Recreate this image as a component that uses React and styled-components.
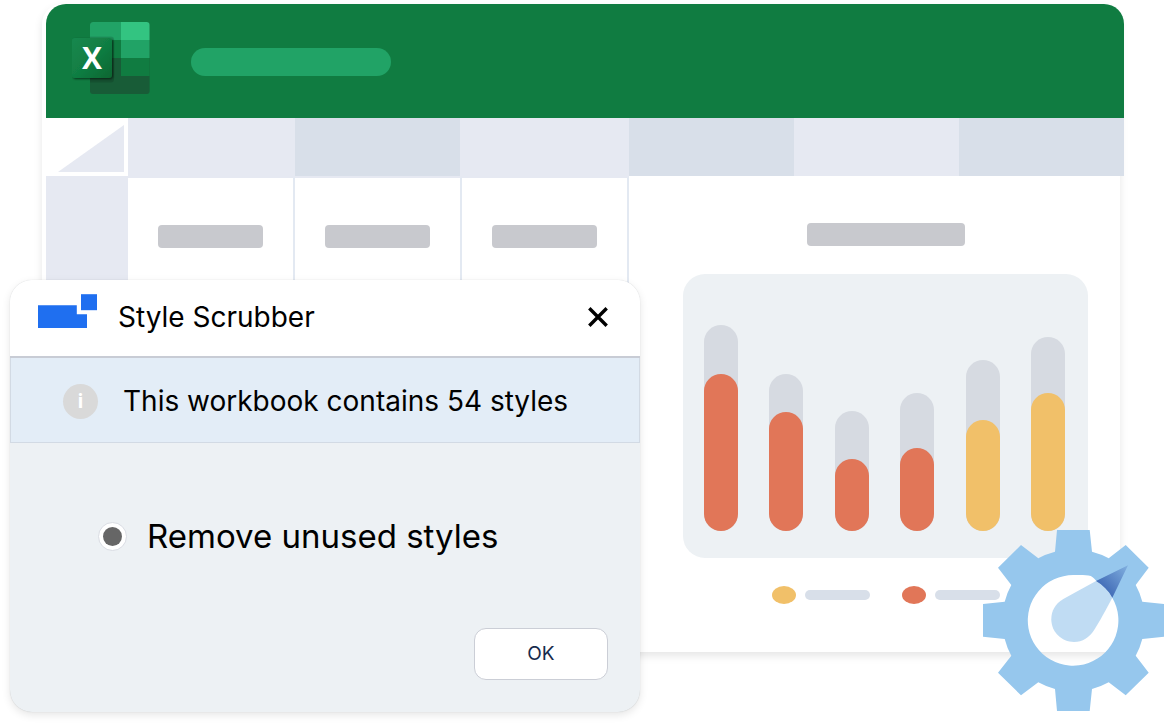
import { useState } from "react";
import styled, { createGlobalStyle } from "styled-components";

const GlobalStyle = createGlobalStyle`
  *,
  *::before,
  *::after {
    box-sizing: border-box;
  }
  body {
    margin: 0;
    background-color: #fff;
    font-family: Inter, "Liberation Sans", sans-serif;
  }
  svg {
    display: block;
    flex-shrink: 0;
  }
`;

const Page = styled.main`
  position: relative;
  min-height: 100vh;
  padding: 4px 44px 0 42px;
  overflow: hidden;
`;

/* Workbook window */
const Workbook = styled.section`
  background-color: #fff;
  border-radius: 20px 20px 0 0;
  box-shadow: 0 4px 8px rgba(0, 0, 0, 0.1);
`;

const WorkbookContent = styled.div`
  margin: 0 -4px 0 4px;
`;

const TitleBar = styled.header`
  display: flex;
  align-items: center;
  gap: 41px;
  padding: 18px 26px 24px;
  background-color: #107c41;
  border-radius: 20px 20px 0 0;
`;

const TitlePill = styled.div`
  width: 200px;
  height: 28px;
  margin-top: 8px;
  border-radius: 14px;
  background-color: #21a366;
`;

const ColumnHeaders = styled.div`
  display: grid;
  grid-template-columns: 82px 167fr 165fr 169fr 165fr 165fr 165fr;
  height: 58px;
`;

const Corner = styled.div`
  display: flex;
  align-items: flex-end;
  justify-content: flex-end;
  padding: 0 4px 4px 0;
`;

const ColumnHeader = styled.div`
  background-color: ${(props) => (props.$dark ? "#d8dfe9" : "#e6e9f2")};
`;

const SheetBody = styled.div`
  display: grid;
  grid-template-columns: 82px 167fr 167fr 167fr 495fr;
`;

const RowHeader = styled.div`
  background-color: #e6e9f2;
`;

const Cell = styled.div`
  display: flex;
  justify-content: center;
  align-items: flex-start;
  padding-top: 47px;
  border-top: 2px solid #e6e9f2;
  border-right: 2px solid #e3e9f2;
`;

const Placeholder = styled.div`
  width: ${(props) => (props.$wide ? 158 : 105)}px;
  height: 23px;
  border-radius: 4px;
  background-color: #c8c9ce;
`;

/* Chart */
const ChartPanel = styled.div`
  display: flex;
  flex-direction: column;
  align-items: center;
  gap: 28px;
  padding: 47px 36px 48px 54px;
`;

const ChartCard = styled.div`
  display: flex;
  align-items: flex-end;
  justify-content: space-between;
  width: 100%;
  height: 284px;
  padding: 0 23px 27px 21px;
  border-radius: 22px;
  background-color: #edf1f4;
`;

const Bar = styled.div`
  display: flex;
  align-items: flex-end;
  width: 34px;
  border-radius: 17px;
  background-color: #d6dae1;
`;

const BarFill = styled.div`
  width: 100%;
  border-radius: 17px;
  background-color: ${(props) => props.$color};
`;

const Legend = styled.div`
  display: flex;
  gap: 32px;
`;

const LegendItem = styled.div`
  display: flex;
  align-items: center;
  gap: 9px;
`;

const LegendDot = styled.div`
  width: 24px;
  height: 18px;
  border-radius: 50%;
  background-color: ${(props) => props.$color};
`;

const LegendLine = styled.div`
  width: 65px;
  height: 10px;
  border-radius: 5px;
  background-color: #d8dfe9;
`;

/* Dialog */
const Dialog = styled.section`
  position: absolute;
  top: 280px;
  left: 10px;
  width: min(630px, calc(100% - 20px));
  border-radius: 22px;
  background-color: #edf1f4;
  box-shadow: 0 0 1px rgba(0, 0, 0, 0.2), 0 3px 9px rgba(0, 0, 0, 0.1);
`;

const DialogHeader = styled.header`
  display: flex;
  align-items: center;
  gap: 20px;
  height: 78px;
  padding: 0 32px 2px 28px;
  border-bottom: 2px solid #c8ccd5;
  border-radius: 22px 22px 0 0;
  background-color: #fff;
`;

const DialogTitle = styled.h1`
  flex: 1;
  margin: 0;
  font-size: 28px;
  line-height: 36px;
  font-weight: 400;
  color: #000;
`;

const CloseButton = styled.button`
  padding: 0;
  border: none;
  background: none;
  color: #000;
  cursor: pointer;
`;

const Banner = styled.div`
  display: flex;
  align-items: center;
  gap: 25px;
  height: 85px;
  padding: 2px 52px 0;
  border: 1px solid #d2dae4;
  border-top: none;
  background-color: #e3edf7;
`;

const InfoBadge = styled.span`
  width: 35px;
  height: 35px;
  border-radius: 50%;
  background-color: #d9d9d9;
  color: #fff;
  font-size: 20px;
  line-height: 35px;
  font-weight: 700;
  text-align: center;
`;

const BannerText = styled.p`
  margin: 0;
  font-size: 28px;
  line-height: 36px;
  color: #000;
`;

const DialogBody = styled.div`
  display: flex;
  flex-direction: column;
  gap: 70px;
  padding: 71px 32px 32px;
`;

const Option = styled.label`
  display: flex;
  align-items: center;
  gap: 20px;
  padding-left: 56px;
  font-size: 33px;
  line-height: 44px;
  color: #000;
`;

const Radio = styled.input.attrs({ type: "radio" })`
  appearance: none;
  display: grid;
  place-content: center;
  width: 29px;
  height: 29px;
  margin: 0;
  border: 1px solid #d9dce3;
  border-radius: 50%;
  background-color: #fff;

  &:checked::before {
    content: "";
    width: 19px;
    height: 19px;
    border-radius: 50%;
    background-color: #666;
  }
`;

const OkButton = styled.button`
  align-self: flex-end;
  width: 134px;
  height: 52px;
  padding: 0;
  border: 1px solid #cbced6;
  border-radius: 12px;
  background-color: #fff;
  font-family: inherit;
  font-size: 19px;
  line-height: 24px;
  color: #172b4d;
  cursor: pointer;
`;

const GearBadge = styled.div`
  position: absolute;
  top: 530px;
  right: 0;
`;

const RED = "#e17658";
const YELLOW = "#f1c069";

const bars = [
  { total: 206, value: 157, color: RED },
  { total: 157, value: 119, color: RED },
  { total: 120, value: 72, color: RED },
  { total: 138, value: 83, color: RED },
  { total: 171, value: 111, color: YELLOW },
  { total: 194, value: 138, color: YELLOW },
];

const columns = [false, true, false, true, false, true];

function ExcelLogo() {
  return (
    <svg width="78" height="72" viewBox="0 0 78 72">
      <defs>
        <linearGradient id="tile" x1="0" y1="0" x2="1" y2="1">
          <stop offset="0" stopColor="#18884f" />
          <stop offset="0.5" stopColor="#117e43" />
          <stop offset="1" stopColor="#0b6631" />
        </linearGradient>
        <clipPath id="book">
          <rect x="18" y="0" width="59.6" height="72" rx="3" />
        </clipPath>
        <filter id="tileShadow" x="-20%" y="-20%" width="150%" height="150%">
          <feDropShadow
            dx="1"
            dy="1"
            stdDeviation="0.8"
            floodColor="#000"
            floodOpacity="0.6"
          />
        </filter>
      </defs>
      <g clipPath="url(#book)">
        <rect x="18" width="60" height="72" fill="#185c37" />
        <rect x="18" width="31" height="18" fill="#21a366" />
        <rect x="49" width="29" height="18" fill="#33c481" />
        <rect x="18" y="18" width="31" height="18" fill="#107c41" />
        <rect x="49" y="18" width="29" height="18" fill="#21a366" />
        <rect x="49" y="36" width="29" height="18" fill="#107c41" />
        <path
          d="M18 14.5h21a3 3 0 0 1 3 3v40a3 3 0 0 1-3 3H18z"
          fill="#000"
          opacity="0.12"
        />
      </g>
      <rect
        y="16"
        width="40"
        height="40"
        rx="3"
        fill="url(#tile)"
        filter="url(#tileShadow)"
      />
      <text
        x="20"
        y="46.6"
        textAnchor="middle"
        fontFamily="'Open Sans', sans-serif"
        fontSize="30"
        fontWeight="700"
        fill="#fff"
      >
        X
      </text>
    </svg>
  );
}

function ScrubberLogo() {
  return (
    <svg width="60" height="46" viewBox="0 0 60 46" fill="#1f6ff0">
      <path d="M0 11.3h38.8v9h10.2v13.8H0z" />
      <rect x="43" y="0.2" width="16" height="16" />
    </svg>
  );
}

function CloseIcon() {
  return (
    <svg width="20" height="22" viewBox="0 0 20 22" fill="none">
      <path
        d="M1.3 2.3l17.4 17.4M18.7 2.3L1.3 19.7"
        stroke="currentColor"
        strokeWidth="3.4"
      />
    </svg>
  );
}

function Gear() {
  return (
    <svg width="181" height="181" viewBox="0 0 181 181">
      <defs>
        <linearGradient
          id="needle"
          gradientUnits="userSpaceOnUse"
          x1="119"
          y1="60"
          x2="145"
          y2="35"
        >
          <stop offset="0" stopColor="#3f69b5" />
          <stop offset="1" stopColor="#82b1e0" />
        </linearGradient>
      </defs>
      <path
        fill="#96c7ed"
        fillRule="evenodd"
        d="M74 0H106.7L109 21.7A71 71 0 0 1 125.7 28.3L142.7 15L165.7 37.7L152.7 55A71 71 0 0 1 159.3 71.7L181 74V106.7L159.3 109A71 71 0 0 1 152.7 125.7L165.7 142.7L142.7 165.3L125.7 152.3A71 71 0 0 1 109 159L106.7 181H74L72 159A71 71 0 0 1 55.3 152.3L38 165.3L15 142.7L28.3 125.7A71 71 0 0 1 21.7 109L0 106.7V74L21.7 71.7A71 71 0 0 1 28.3 55L15 37.7L38 15L55.3 28.3A71 71 0 0 1 72 21.7Z
          M90.3 45.1A45.3 45.3 0 1 0 129.3 67.7C125.5 60.5 119.8 55 113.3 51C110.5 48 109 46 105.5 45.6C101 45 95 45.1 90.3 45.1Z"
      />
      <path
        fill="#c0dcf3"
        d="M113 51L80.3 69C72 74 68.3 81 68.3 89.3C68.3 102 78.5 112 91 112C99.5 112 106.5 107.5 111 100.3C116 92 123 80 129.3 67.7C125.5 60.5 119.8 55 113 51Z"
      />
      <path
        fill="url(#needle)"
        d="M145 35.3L113 51C119.8 55 125.5 60.5 129.3 67.7Z"
      />
    </svg>
  );
}

function Chart() {
  return (
    <ChartPanel>
      <Placeholder $wide />
      <ChartCard>
        {bars.map((bar, index) => (
          <Bar key={index} style={{ height: bar.total }}>
            <BarFill $color={bar.color} style={{ height: bar.value }} />
          </Bar>
        ))}
      </ChartCard>
      <Legend>
        {[YELLOW, RED].map((color) => (
          <LegendItem key={color}>
            <LegendDot $color={color} />
            <LegendLine />
          </LegendItem>
        ))}
      </Legend>
    </ChartPanel>
  );
}

function StyleScrubberDialog() {
  const [action, setAction] = useState("unused");

  return (
    <Dialog role="dialog" aria-labelledby="dialog-title">
      <DialogHeader>
        <ScrubberLogo />
        <DialogTitle id="dialog-title">Style Scrubber</DialogTitle>
        <CloseButton type="button" aria-label="Close">
          <CloseIcon />
        </CloseButton>
      </DialogHeader>
      <Banner>
        <InfoBadge>i</InfoBadge>
        <BannerText>This workbook contains 54 styles</BannerText>
      </Banner>
      <DialogBody>
        <Option htmlFor="unused">
          <Radio
            id="unused"
            name="action"
            value="unused"
            checked={action === "unused"}
            onChange={(e) => setAction(e.target.value)}
          />
          Remove unused styles
        </Option>
        <OkButton type="button">OK</OkButton>
      </DialogBody>
    </Dialog>
  );
}

function App() {
  return (
    <>
      <GlobalStyle />
      <Page>
        <Workbook>
          <WorkbookContent>
            <TitleBar>
              <ExcelLogo />
              <TitlePill />
            </TitleBar>
            <ColumnHeaders>
              <Corner>
                <svg width="66" height="47" viewBox="0 0 66 47">
                  <path d="M66 0V47H0Z" fill="#e6e9f2" />
                </svg>
              </Corner>
              {columns.map((dark, index) => (
                <ColumnHeader key={index} $dark={dark} />
              ))}
            </ColumnHeaders>
            <SheetBody>
              <RowHeader />
              <Cell>
                <Placeholder />
              </Cell>
              <Cell>
                <Placeholder />
              </Cell>
              <Cell>
                <Placeholder />
              </Cell>
              <Chart />
            </SheetBody>
          </WorkbookContent>
        </Workbook>
        <StyleScrubberDialog />
        <GearBadge>
          <Gear />
        </GearBadge>
      </Page>
    </>
  );
}

export default App;
